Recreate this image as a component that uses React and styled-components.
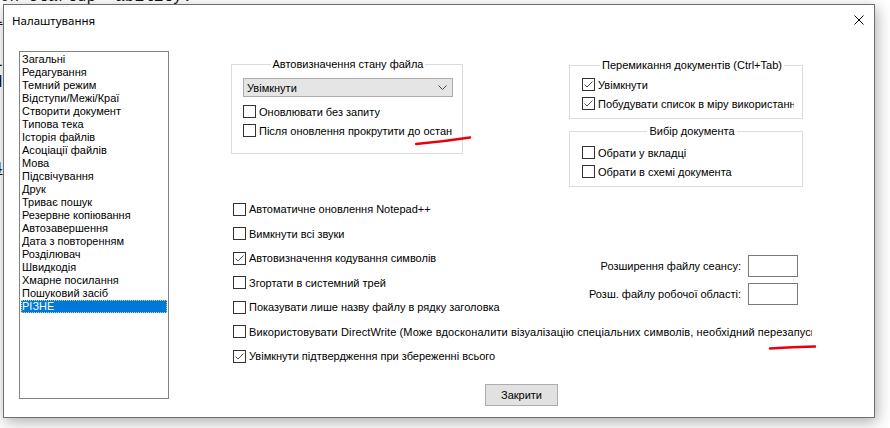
import React from 'react';
import styled, { createGlobalStyle } from 'styled-components';

const GlobalStyle = createGlobalStyle`
  html, body {
    margin: 0;
    padding: 0;
    background: #fff;
  }
  body {
    width: 890px;
    height: 428px;
    overflow: hidden;
    position: relative;
    font-family: "Liberation Sans", Arial, sans-serif;
    color: #000;
  }
`

// editor text that shows behind the dialog
const Backdrop = styled.div`
  margin-top: -13px;
  font-family: "Liberation Mono", "Courier New", monospace;
  font-size: 16px;
  line-height: 21.5px;
  color: #111;
  white-space: pre;
`
const BackLine = styled.div`
  height: 21.5px;
  margin-left: ${p => p.shift || 0}px;
  text-decoration: ${p => p.link ? 'underline' : 'none'};
`

const Dialog = styled.div`
  position: absolute;
  left: 3px;
  top: 4px;
  width: 872px;
  height: 414px;
  box-sizing: border-box;
  border: 1px solid #6e6e6e;
  background: #fff;
  box-shadow: 2px 4px 14px rgba(0,0,0,0.32);
  display: flex;
  flex-direction: column;
`
const TitleBar = styled.div`
  height: 30px;
  flex-shrink: 0;
  display: flex;
  align-items: center;
  justify-content: space-between;
  padding: 0 10px 0 8px;
`
const Title = styled.span`
  font-family: "Noto Sans", "Liberation Sans", sans-serif;
  font-size: 11.5px;
`
const CloseButton = styled.button`
  border: 0;
  background: none;
  padding: 0;
  width: 10px;
  height: 10px;
  display: flex;
`

const Body = styled.div`
  flex: 1;
  display: flex;
  padding: 16px 0 0 15px;
  min-width: 0;
`
const ListBox = styled.ul`
  width: 150px;
  height: 348px;
  box-sizing: border-box;
  border: 1px solid #828282;
  margin: 0;
  padding: 1px;
  list-style: none;
  flex-shrink: 0;
`
const ListItem = styled.li`
  height: 13px;
  line-height: 13px;
  font-size: 11px;
  padding-left: 1px;
  white-space: nowrap;
  box-sizing: border-box;
  background: ${p => p.selected ? '#0078d7' : 'transparent'};
  color: ${p => p.selected ? '#fff' : '#000'};
  outline: ${p => p.selected ? '1px dotted #c9d98a' : 'none'};
  outline-offset: -1px;
`

const Pane = styled.div`
  flex: 1;
  min-width: 0;
  display: flex;
  flex-direction: column;
`
const TopRow = styled.div`
  display: flex;
  align-items: flex-start;
  margin: 7px 0 0 62px;
`
const SideColumn = styled.div`
  display: flex;
  flex-direction: column;
  margin: 1px 0 0 106px;
`
const Group = styled.fieldset`
  margin: ${p => p.top || 0}px 0 0 0;
  width: ${p => p.width}px;
  box-sizing: border-box;
  border: 1px solid #dcdcdc;
  padding: ${p => p.pad};
  min-width: 0;
`
const Legend = styled.legend`
  margin: 0 auto;
  padding: 0 2px;
  font-size: 11px;
  line-height: 12px;
`
const Combo = styled.div`
  height: 19px;
  box-sizing: border-box;
  border: 1px solid #acacac;
  background: #e5e5e5;
  display: flex;
  align-items: center;
  justify-content: space-between;
  padding: 0 5px 0 3px;
  font-size: 11px;
  margin-bottom: 5px;
`
const CheckRow = styled.label`
  display: flex;
  align-items: center;
  gap: 3px;
  height: ${p => p.h}px;
  font-size: 11px;
  white-space: nowrap;
`
const Box = styled.span`
  width: 13px;
  height: 13px;
  box-sizing: border-box;
  border: 1px solid #333;
  background: #fff;
  flex-shrink: 0;
  display: flex;
`
const ClipText = styled.span`
  width: ${p => p.width}px;
  flex-shrink: 0;
  overflow: hidden;
  letter-spacing: ${p => p.spacing || 0}px;
`

const LowerRow = styled.div`
  display: flex;
  margin: 10px 0 0 64px;
  align-items: flex-start;
`
const CheckList = styled.div`
  flex: 1;
  min-width: 0;
  display: flex;
  flex-direction: column;
`
const Fields = styled.div`
  flex-shrink: 0;
  display: grid;
  grid-template-columns: auto 50px;
  column-gap: 7px;
  row-gap: 6px;
  align-items: center;
  justify-items: end;
  margin: 58px 76px 0 0;
  font-size: 11px;
  white-space: nowrap;
`
const TextField = styled.input`
  width: 50px;
  height: 22px;
  box-sizing: border-box;
  border: 1px solid #7a7a7a;
  margin: 0;
  padding: 0 3px;
  background: #fff;
`
const Footer = styled.div`
  display: flex;
  justify-content: center;
  margin-top: 15px;
`
const PushButton = styled.button`
  width: 73px;
  height: 22px;
  box-sizing: border-box;
  border: 1px solid #adadad;
  background: #e1e1e1;
  font-family: "Liberation Sans", Arial, sans-serif;
  font-size: 11px;
  color: #000;
  padding: 0;
`
const Marks = styled.svg`
  position: absolute;
  left: 0;
  top: 0;
  width: 890px;
  height: 428px;
  pointer-events: none;
`

const categories = [
  'Загальні', 'Редагування', 'Темний режим', 'Відступи/Межі/Краї', 'Створити документ',
  'Типова тека', 'Історія файлів', 'Асоціації файлів', 'Мова', 'Підсвічування', 'Друк',
  'Триває пошук', 'Резервне копіювання', 'Автозавершення', 'Дата з повторенням',
  'Розділювач', 'Швидкодія', 'Хмарне посилання', 'Пошуковий засіб', 'РІЗНЕ'
]

const options = [
  { text: 'Автоматичне оновлення Notepad++' },
  { text: 'Вимкнути всі звуки' },
  { text: 'Автовизначення кодування символів', checked: true },
  { text: 'Згортати в системний трей' },
  { text: 'Показувати лише назву файлу в рядку заголовка' },
  { text: 'Використовувати DirectWrite (Може вдосконалити візуалізацію спеціальних символів, необхідний перезапуск)', clip: 563, spacing: 0.11 },
  { text: 'Увімкнути підтвердження при збереженні всього', checked: true },
]

const Check = ({ checked, label, h, clip, spacing }) => (
  <CheckRow h={h}>
    <Box>
      {checked && (
        <svg width="11" height="11" viewBox="0 0 11 11">
          <path d="M1.5 5.5 L4 8 L9.5 2.5" fill="none" stroke="#555" strokeWidth="1" />
        </svg>
      )}
    </Box>
    {clip ? <ClipText width={clip} spacing={spacing}>{label}</ClipText> : <span>{label}</span>}
  </CheckRow>
)

const App = () => (
  <>
    <GlobalStyle />
    <Backdrop>
      <BackLine>on startup" ability.</BackLine>
      <BackLine shift={-7} link>l</BackLine>
      <BackLine />
      <BackLine shift={-7}>i</BackLine>
      <BackLine shift={-7}>d</BackLine>
      <BackLine />
      <BackLine />
      <BackLine />
      <BackLine shift={-7} link>4</BackLine>
    </Backdrop>

    <Dialog>
      <TitleBar>
        <Title>Налаштування</Title>
        <CloseButton>
          <svg width="10" height="10" viewBox="0 0 10 10">
            <path d="M0.5 0.5 L9.5 9.5 M9.5 0.5 L0.5 9.5" stroke="#000" strokeWidth="1" />
          </svg>
        </CloseButton>
      </TitleBar>
      <Body>
        <ListBox>
          {categories.map((c, i) => (
            <ListItem key={c} selected={i === categories.length - 1}>{c}</ListItem>
          ))}
        </ListBox>
        <Pane>
          <TopRow>
            <Group width={232} pad="8px 9px 13px 11px">
              <Legend>Автовизначення стану файла</Legend>
              <Combo>
                <span>Увімкнути</span>
                <svg width="9" height="5" viewBox="0 0 9 5">
                  <path d="M0.5 0.5 L4.5 4.5 L8.5 0.5" fill="none" stroke="#444" strokeWidth="1" />
                </svg>
              </Combo>
              <Check h={19} label="Оновлювати без запиту" />
              <Check h={19} label="Після оновлення прокрутити до останнього рядка" clip={193} />
            </Group>
            <SideColumn>
              <Group width={234} pad="4px 0 5px 12px">
                <Legend>Перемикання документів (Ctrl+Tab)</Legend>
                <Check h={19} checked label="Увімкнути" />
                <Check h={19} checked label="Побудувати список в міру використання" clip={196} />
              </Group>
              <Group width={234} top={6} pad="6px 0 5px 12px">
                <Legend>Вибір документа</Legend>
                <Check h={19} label="Обрати у вкладці" />
                <Check h={19} label="Обрати в схемі документа" />
              </Group>
            </SideColumn>
          </TopRow>
          <LowerRow>
            <CheckList>
              {options.map(o => (
                <Check key={o.text} h={24.5} checked={o.checked} label={o.text} clip={o.clip} spacing={o.spacing} />
              ))}
            </CheckList>
            <Fields>
              <span>Розширення файлу сеансу:</span>
              <TextField />
              <span>Розш. файлу робочої області:</span>
              <TextField />
            </Fields>
          </LowerRow>
          <Footer>
            <PushButton>Закрити</PushButton>
          </Footer>
        </Pane>
      </Body>
    </Dialog>

    <Marks viewBox="0 0 890 428">
      <path d="M416 144 Q444 141.5 470 137.5" fill="none" stroke="#e8000b" strokeWidth="2.4" strokeLinecap="round" />
      <path d="M770 348.5 Q792 347.2 815 346.5" fill="none" stroke="#e8000b" strokeWidth="2.4" strokeLinecap="round" />
    </Marks>
  </>
)

export default App
